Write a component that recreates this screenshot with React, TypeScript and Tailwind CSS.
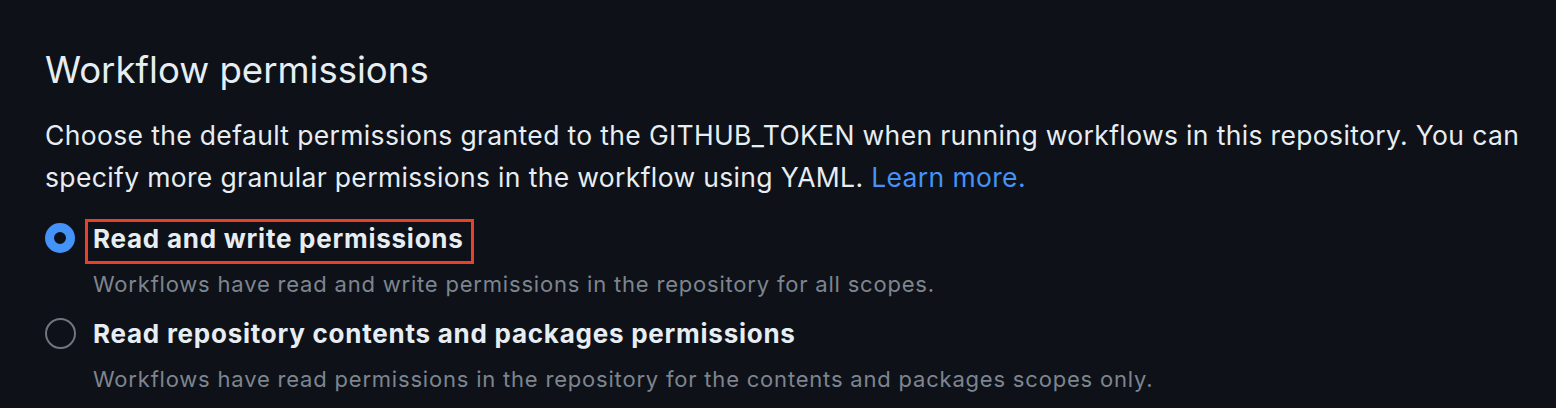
import React from 'react';

const options = [
  {
    label: 'Read and write permissions',
    desc: 'Workflows have read and write permissions in the repository for all scopes.',
    checked: true,
  },
  {
    label: 'Read repository contents and packages permissions',
    desc: 'Workflows have read permissions in the repository for the contents and packages scopes only.',
    checked: false,
  },
];

const App: React.FC = () => {
  return (
    <div className="w-[1556px] h-[408px] overflow-hidden bg-[#0e1117] text-[#e6edf3] font-['Inter',sans-serif]">
      <div className="pl-[45px] pt-[45px]">
        <h2 className="text-[36.6px] leading-[50px] font-normal">Workflow permissions</h2>

        <p className="mt-[19px] text-[26.5px] leading-[42px] tracking-[0.35px] w-[1500px]">
          Choose the default permissions granted to the GITHUB_TOKEN when running workflows in this repository. You can
          <br />
          specify more granular permissions in the workflow using YAML.{' '}
          <a className="text-[#4493f8]">Learn more.</a>
        </p>

        <div className="mt-[21px] flex flex-col gap-[11px]">
          {options.map((opt, i) => (
            <div key={i} className="flex">
              <div className="w-[48px] shrink-0">
                {opt.checked ? (
                  <div className="mt-[4px] w-[30px] h-[30px] rounded-full border-[9px] border-[#4493f8] bg-[#0e1117]" />
                ) : (
                  <div className="mt-[4px] w-[31px] h-[31px] rounded-full border-[2.5px] border-[#6e7681]" />
                )}
              </div>
              <div className="flex flex-col">
                <div className="flex">
                  <span
                    className={`text-[26px] leading-[33px] pb-[6px] font-bold tracking-[0.75px] border-[3px] pl-[5px] pr-[7px] -ml-[8px] ${
                      opt.checked ? 'border-[#ea3f2a]' : 'border-transparent'
                    }`}
                  >
                    {opt.label}
                  </span>
                </div>
                <div className="mt-[1px] text-[22px] leading-[38px] tracking-[0.8px] text-[#7d8590]">{opt.desc}</div>
              </div>
            </div>
          ))}
        </div>
      </div>
    </div>
  );
};

export default App;
